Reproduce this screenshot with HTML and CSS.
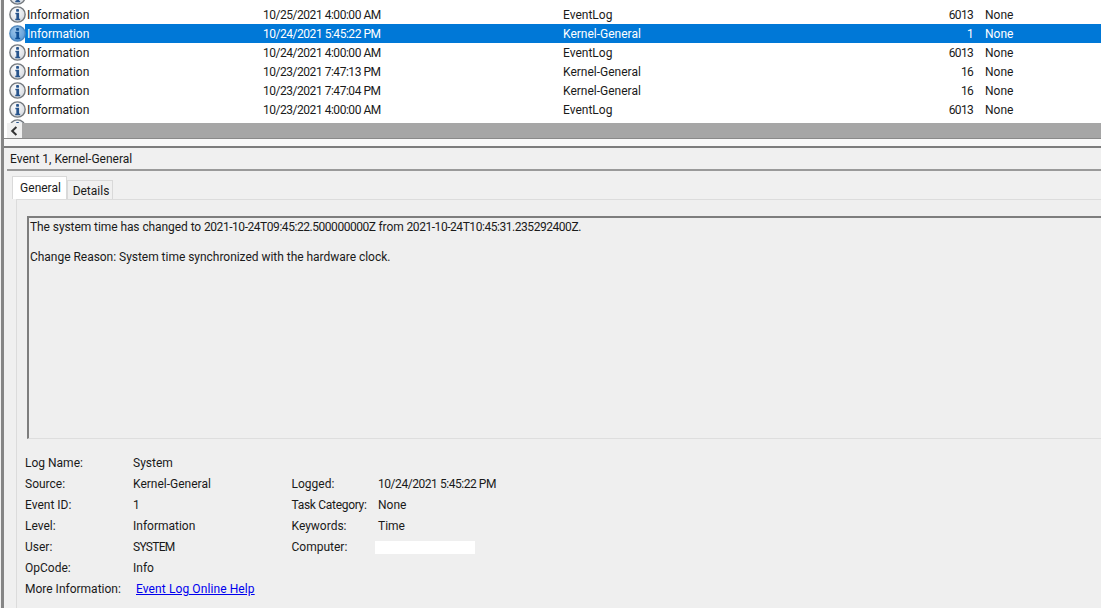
FILE: index.html
```html
<!DOCTYPE html>
<html lang="en">
<head>
<meta charset="utf-8">
<title>Event Viewer</title>
<link rel="stylesheet" href="styles.css">
</head>
<body>
<svg class="defs" width="0" height="0" aria-hidden="true">
  <defs>
    <radialGradient id="disc" cx="40%" cy="35%" r="70%"><stop offset="0" stop-color="#ffffff"/><stop offset="1" stop-color="#d3d8df"/></radialGradient>
    <radialGradient id="discSel" cx="40%" cy="35%" r="70%"><stop offset="0" stop-color="#9cc4e8"/><stop offset="1" stop-color="#5a9ad6"/></radialGradient>
    <symbol id="info" viewBox="0 0 16 16">
      <circle cx="8" cy="8" r="7.2" fill="url(#disc)" stroke="#74797e" stroke-width="1.3"/>
      <rect x="6.7" y="2.8" width="2.7" height="2.6" rx=".8" fill="#27548c"/>
      <path d="M6 6.4h3.5v5.6h1v1.3H5.9V12h1V7.7H6z" fill="#27548c"/>
    </symbol>
    <symbol id="infoSel" viewBox="0 0 16 16">
      <circle cx="8" cy="8" r="7.2" fill="url(#discSel)" stroke="#4f87bd" stroke-width="1.3"/>
      <rect x="6.7" y="2.8" width="2.7" height="2.6" rx=".8" fill="#0f4f96"/>
      <path d="M6 6.4h3.5v5.6h1v1.3H5.9V12h1V7.7H6z" fill="#0f4f96"/>
    </symbol>
  </defs>
</svg>
<div class="frame">
  <section class="list">
    <div class="clip-top"><svg class="ico"><use href="#info"/></svg></div>
    <div class="row"><svg class="ico"><use href="#info"/></svg><span class="c-level">Information</span><span class="c-date">10/25/2021 4:00:00 AM</span><span class="c-src">EventLog</span><span class="c-id">6013</span><span class="c-task">None</span></div>
    <div class="row selected"><svg class="ico"><use href="#infoSel"/></svg><span class="c-level">Information</span><span class="c-date">10/24/2021 5:45:22 PM</span><span class="c-src">Kernel-General</span><span class="c-id">1</span><span class="c-task">None</span></div>
    <div class="row"><svg class="ico"><use href="#info"/></svg><span class="c-level">Information</span><span class="c-date">10/24/2021 4:00:00 AM</span><span class="c-src">EventLog</span><span class="c-id">6013</span><span class="c-task">None</span></div>
    <div class="row"><svg class="ico"><use href="#info"/></svg><span class="c-level">Information</span><span class="c-date">10/23/2021 7:47:13 PM</span><span class="c-src">Kernel-General</span><span class="c-id">16</span><span class="c-task">None</span></div>
    <div class="row"><svg class="ico"><use href="#info"/></svg><span class="c-level">Information</span><span class="c-date">10/23/2021 7:47:04 PM</span><span class="c-src">Kernel-General</span><span class="c-id">16</span><span class="c-task">None</span></div>
    <div class="row"><svg class="ico"><use href="#info"/></svg><span class="c-level">Information</span><span class="c-date">10/23/2021 4:00:00 AM</span><span class="c-src">EventLog</span><span class="c-id">6013</span><span class="c-task">None</span></div>
    <div class="clip-bottom"><svg class="ico"><use href="#info"/></svg></div>
    <div class="hscroll">
      <div class="hbtn"><svg width="9" height="10" viewBox="0 0 9 10"><path d="M6.4 1 2.2 5l4.2 4" fill="none" stroke="#333" stroke-width="2"/></svg></div>
      <div class="hthumb"></div>
    </div>
  </section>
  <section class="detail">
    <header class="title">Event 1, Kernel-General</header>
    <nav class="tabs">
      <span class="tab active">General</span>
      <span class="tab">Details</span>
    </nav>
    <div class="panel">
      <div class="message">
        <p class="line-a">The system time has changed to <span class="num">2021-10-24T09:45:22.500000000Z</span> from <span class="num">2021-10-24T10:45:31.235292400Z</span>.</p>
        <p class="line-b">Change Reason: System time synchronized with the hardware clock.</p>
      </div>
      <div class="props">
        <span class="k">Log Name:</span><span class="v">System</span><span></span><span></span>
        <span class="k">Source:</span><span class="v">Kernel-General</span><span class="k">Logged:</span><span class="v num">10/24/2021 5:45:22 PM</span>
        <span class="k">Event ID:</span><span class="v">1</span><span class="k tight">Task Category:</span><span class="v">None</span>
        <span class="k">Level:</span><span class="v">Information</span><span class="k">Keywords:</span><span class="v">Time</span>
        <span class="k">User:</span><span class="v tight-more">SYSTEM</span><span class="k">Computer:</span><span class="v"><span class="redacted"></span></span>
        <span class="k">OpCode:</span><span class="v">Info</span><span></span><span></span>
        <span class="k">More Information:</span><span class="v"><a class="help" href="#">Event Log Online Help</a></span><span></span><span></span>
      </div>
    </div>
  </section>
</div>
</body>
</html>
```
FILE: styles.css
```css
* { box-sizing: border-box; }
html, body { margin: 0; height: 100%; }
body {
  width: 1101px;
  height: 608px;
  overflow: hidden;
  background: #f0f0f0;
  font-family: Roboto, "Noto Sans", sans-serif;
  font-size: 12px;
  color: #1a1a1a;
}
.defs { position: absolute; }
.num { letter-spacing: -0.45px; }
.tight { letter-spacing: -0.3px; }
.tight-more { letter-spacing: -0.7px; }
.frame {
  height: 608px;
  margin-left: 1px;
  border-left: 3px solid #858585;
  overflow: hidden;
  background: #f8f8f8;
}
.list {
  background: #fff;
  padding-left: 3px;
  height: 139px;
  border-bottom: 1px solid #8a8a8a;
}
.clip-top { height: 5px; display: flex; align-items: flex-end; overflow: hidden; padding-left: 2px; }
.clip-bottom { height: 4px; overflow: hidden; padding-left: 2px; }
.ico { width: 17px; height: 17px; flex: none; display: block; }
.row {
  display: flex;
  align-items: center;
  height: 19px;
  padding-left: 2px;
  white-space: nowrap;
}
.row span { display: block; }
.c-level { margin-left: 1px; width: 236px; }
.c-date { width: 300px; letter-spacing: -0.47px; }
.c-src { width: 300px; }
.c-id { width: 110px; text-align: right; letter-spacing: -0.7px; }
.c-task { margin-left: 12px; }
.selected { background: linear-gradient(to right, #fff 0, #fff 18px, #0078d7 18px); color: #fff; }
.hscroll { display: flex; height: 15px; background: #a6a6a6; }
.hbtn {
  width: 15px;
  height: 15px;
  background: #f0f0f0;
  display: flex;
  align-items: center;
  justify-content: center;
}
.hthumb { flex: 1; }
.detail {
  border-top: 2px solid #7d7d7d;
  margin-top: 7px;
  padding-left: 1px;
  background: #f0f0f0;
}
.title {
  height: 23px;
  margin-left: 2px;
  padding-left: 3px;
  line-height: 22px;
  border-bottom: 2px solid #9a9a9a;
}
.tabs { display: flex; height: 21px; margin-top: 7px; padding-left: 7px; align-items: flex-end; }
.tab {
  display: block;
  width: 46px;
  height: 19px;
  padding-left: 2px;
  text-align: center;
  line-height: 20px;
  background: #f0f0f0;
  border: 1px solid #d9d9d9;
  border-bottom: 0;
}
.tab.active { width: 55px; height: 23px; line-height: 22px; background: #fff; position: relative; z-index: 1; }
.panel { margin-left: 11px; border-top: 1px solid #dcdcdc; border-left: 1px solid #dcdcdc; background: #efefef; padding: 16px 0 0 11px; height: 420px; }
.message {
  height: 223px;
  margin-left: -1px;
  border-top: 2px solid #7d7d7d;
  border-left: 2px solid #7d7d7d;
  border-bottom: 1px solid #dedede;
  padding: 1px 0 0 1px;
}
.message p { margin: 0 0 13px; line-height: 17px; white-space: nowrap; }
.message .line-a { letter-spacing: -0.08px; }
.message .line-a .num { letter-spacing: -0.45px; }
.message .line-b { letter-spacing: -0.03px; }
.props {
  display: grid;
  grid-template-columns: 108px 158.5px 86.5px 1fr;
  grid-auto-rows: 21px;
  margin: 14px 0 0 -3px;
  line-height: 21px;
  white-space: nowrap;
}
.redacted { display: inline-block; width: 100px; height: 13px; background: #fff; vertical-align: middle; margin-left: -3px; }
.help { color: #0000ee; margin-left: 3px; letter-spacing: 0.1px; }
```
